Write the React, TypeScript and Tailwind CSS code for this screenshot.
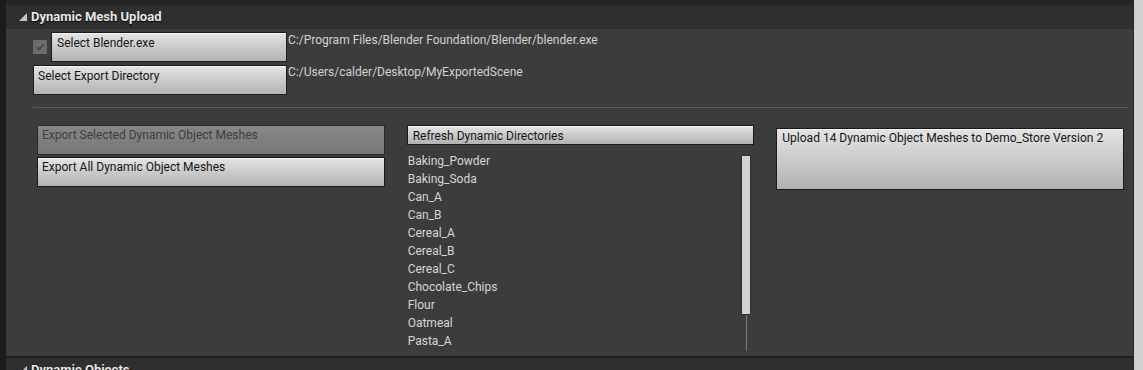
import React from "react";

const MESHES = [
  "Baking_Powder",
  "Baking_Soda",
  "Can_A",
  "Can_B",
  "Cereal_A",
  "Cereal_B",
  "Cereal_C",
  "Chocolate_Chips",
  "Flour",
  "Oatmeal",
  "Pasta_A",
  "Pasta_B",
  "Sugar",
];

const btn =
  "border border-[#1a1a1a] bg-gradient-to-b from-[#e4e4e4] to-[#b2b2b2] text-left text-[12px] leading-[15px] text-[#151515] shadow-[inset_0_1px_0_#f4f4f4]";

function Expander() {
  return (
    <svg width="8" height="8" viewBox="0 0 8 8" className="shrink-0">
      <path d="M8 0 L8 8 L0 8 Z" fill="#c4c4c4" />
    </svg>
  );
}

function SectionHeader({ title }: { title: string }) {
  return (
    <div className="flex h-[24px] shrink-0 items-center gap-[4px] bg-[#2f2f2f] pl-[13px]">
      <Expander />
      <span className="text-[13px] font-bold text-[#e8e8e8] [text-shadow:0_1px_1px_#000]">{title}</span>
    </div>
  );
}

export default function App() {
  return (
    <div
      className="flex h-[370px] w-[1143px] overflow-hidden bg-[#1c1c1c]"
      style={{ fontFamily: "Roboto, 'Noto Sans', sans-serif" }}
    >
      <div className="w-[6px] shrink-0" />
      <div className="flex min-w-0 flex-1 flex-col">
        <div className="h-[5px] shrink-0 bg-[#262626]" />
        <SectionHeader title="Dynamic Mesh Upload" />

        <div className="h-[327px] shrink-0 overflow-hidden bg-[#3c3c3c] pt-[3px]">
          {/* blender + export dir rows */}
          <div className="flex pl-[27px]">
            <div className="flex w-[18px] shrink-0 items-start pt-[8px]">
              <div className="flex h-[14px] w-[14px] items-center justify-center rounded-[1px] bg-[#6b6b6b]">
                <svg width="10" height="10" viewBox="0 0 10 10">
                  <path d="M1.5 5.2 L4 7.6 L8.6 2.4" stroke="#4a4a4a" strokeWidth="1.8" fill="none" />
                </svg>
              </div>
            </div>
            <button className={`${btn} h-[30px] w-[236px] px-[5px] pb-[11px] pt-[3px]`}>Select Blender.exe</button>
            <span className="pl-[1px] pt-[1px] text-[12px] leading-[15px] text-[#d2d2d2]">
              C:/Program Files/Blender Foundation/Blender/blender.exe
            </span>
          </div>
          <div className="mt-[3px] flex pl-[27px]">
            <button className={`${btn} h-[30px] w-[254px] px-[4px] pb-[11px] pt-[3px]`}>Select Export Directory</button>
            <span className="pl-[1px] text-[12px] leading-[15px] text-[#d2d2d2]">
              C:/Users/calder/Desktop/MyExportedScene
            </span>
          </div>

          <div className="ml-[27px] mr-[5px] mt-[12px] h-px bg-[#5c5c5c]" />

          {/* three columns */}
          <div className="mt-[17px] grid grid-cols-3 gap-[22px] pl-[31px] pr-[9px]">
            <div className="flex flex-col gap-[2px]">
              <button className="h-[30px] border border-[#2a2a2a] bg-gradient-to-b from-[#878787] to-[#777777] px-[4px] pb-[11px] pt-[2px] text-left text-[12px] leading-[15px] text-[#3e3e3e]">
                Export Selected Dynamic Object Meshes
              </button>
              <button className={`${btn} h-[30px] px-[4px] pb-[11px] pt-[2px]`}>Export All Dynamic Object Meshes</button>
            </div>

            <div className="flex flex-col">
              <button className={`${btn} h-[20px] px-[5px] pt-[2px]`}>Refresh Dynamic Directories</button>
              <div className="relative mt-[6px] h-[200px] overflow-hidden">
                <div className="flex flex-col pl-[1px] pt-[1px]">
                  {MESHES.map((m, i) => (
                    <span key={`mesh-${i}`} className="h-[18px] text-[12px] leading-[18px] text-[#d6d6d6]">
                      {m}
                    </span>
                  ))}
                </div>
                {/* list scrollbar */}
                <div className="absolute right-[3px] top-[4px] flex h-[196px] w-[10px] flex-col items-center">
                  <div className="h-[160px] w-[10px] rounded-[1px] border border-[#2e2e2e] bg-[#d3d3d3]" />
                  <div className="w-px flex-1 bg-[#7a7a7a]" />
                </div>
              </div>
            </div>

            <div>
              <button className={`${btn} h-[62px] w-full px-[5px] pb-[44px] pt-[2px]`}>
                Upload 14 Dynamic Object Meshes to Demo_Store Version 2
              </button>
            </div>
          </div>
        </div>

        <div className="h-[2px] shrink-0 bg-[#202020]" />
        <SectionHeader title="Dynamic Objects" />
      </div>
      <div className="w-[10px] shrink-0 border-l border-[#262626] bg-[#d1d1d1]" />
    </div>
  );
}
